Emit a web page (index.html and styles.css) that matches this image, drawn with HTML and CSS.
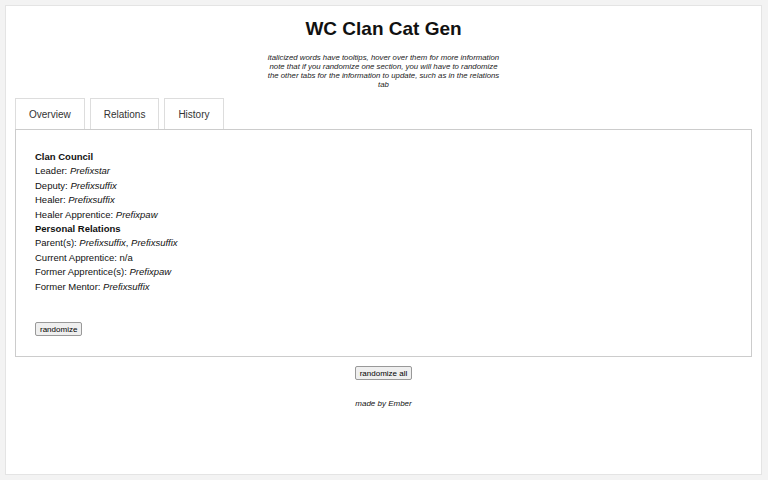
FILE: index.html
```html
<!DOCTYPE html>
<html lang="en">
  <head>
    <meta charset="UTF-8" />
    <meta name="viewport" content="width=device-width, initial-scale=1.0" />
    <title>WC Clan Cat Gen</title>
    <link rel="stylesheet" href="styles.css">
  </head>

  <body>
    <div class="page">
      <h1>WC Clan Cat Gen</h1>
      <p class="note">
        italicized words have tooltips, hover over them for more information<br />
        note that if you randomize one section, you will have to randomize the other tabs for the information to update, such as in the relations tab
      </p>

      <ul class="tabs">
        <li class="tab">Overview</li>
        <li class="tab active">Relations</li>
        <li class="tab">History</li>
      </ul>
      <div class="panel">
        <div class="info">
          <b>Clan Council</b><br />
          Leader: <i>Prefixstar</i><br />
          Deputy: <i>Prefixsuffix</i><br />
          Healer: <i>Prefixsuffix</i><br />
          Healer Apprentice: <i>Prefixpaw</i><br />
          <b>Personal Relations</b><br />
          Parent(s): <i>Prefixsuffix</i>, <i>Prefixsuffix</i><br />
          Current Apprentice: n/a<br />
          Former Apprentice(s): <i>Prefixpaw</i><br />
          Former Mentor: <i>Prefixsuffix</i>
        </div>
        <button class="btn">randomize</button>
      </div>

      <div class="footer">
        <button class="btn">randomize all</button>
        <p class="credit">made by Ember</p>
      </div>
    </div>
  </body>
</html>
```

FILE: styles.css
```css
* {
  margin: 0;
  padding: 0;
  box-sizing: border-box;
}

body {
  background: #f3f3f3;
  font-family: "Liberation Sans", Arial, sans-serif;
  color: #111;
}

.page {
  margin: 5px;
  width: 757px;
  height: 470px;
  padding: 12px 9px;
  background: #fff;
  border: 1px solid #e4e4e4;
}

h1 {
  text-align: center;
  font-size: 19px;
  margin-bottom: 13px;
}

.note {
  width: 236px;
  margin: 0 auto;
  text-align: center;
  font-size: 7.8px;
  line-height: 9px;
  font-style: italic;
  color: #222;
}

.tabs {
  list-style: none;
  display: flex;
  gap: 5px;
  margin-top: 9px;
}
.tab {
  height: 31px;
  line-height: 31px;
  padding: 0 13px;
  font-size: 10px;
  color: #333;
  background: #fff;
  border: 1px solid #ddd;
  border-bottom: 0;
}
.tab.active {
  position: relative;
  z-index: 1;
  margin-bottom: -1px;
}

.panel {
  border: 1px solid #ccc;
  padding: 20px 19px 20px;
  height: 228px;
}

.info {
  font-size: 9.5px;
  line-height: 14.4px;
  margin-bottom: 28px;
}

.btn {
  display: block;
  height: 14px;
  font-family: "Liberation Sans", Arial, sans-serif;
  font-size: 8px;
  padding: 0 4px;
  background: #efefef;
  border: 1px solid #999;
  border-radius: 2px;
  color: #000;
}

.footer {
  margin-top: 9px;
}
.footer .btn {
  margin: 0 auto;
}
.credit {
  text-align: center;
  font-size: 8px;
  font-style: italic;
  margin-top: 19px;
}
```
